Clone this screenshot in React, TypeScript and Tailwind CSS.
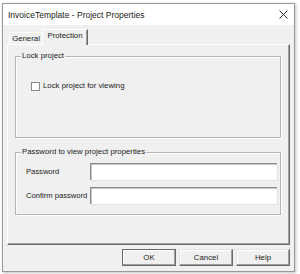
const font = "font-['Liberation_Sans',Arial,sans-serif]";

function GroupBox({ label, className, children }: { label: string; className: string; children?: React.ReactNode }) {
  return (
    <div className={`relative border border-[#b5b5b5] shadow-[inset_1px_1px_0_#ffffff,1px_1px_0_#ffffff] ${className}`}>
      <span className="absolute -top-[6px] left-[5px] whitespace-nowrap bg-[#f0f0f0] px-[1px] text-[7.8px] leading-[10px] text-[#1a1a1a]">
        {label}
      </span>
      {children}
    </div>
  );
}

function Field({ label }: { label: string }) {
  return (
    <div className="flex items-center">
      <span className="w-[64px] shrink-0 whitespace-nowrap text-[7.6px] leading-[10px] text-[#1a1a1a]">{label}</span>
      <div className="h-[17px] min-w-0 flex-1 bg-white border-t border-l border-[#8c8c8c] shadow-[inset_1px_1px_0_#c8c8c8,1px_1px_0_#e3e3e3]" />
    </div>
  );
}

function Button({ label, isDefault }: { label: string; isDefault?: boolean }) {
  return (
    <div
      className={
        isDefault
          ? 'flex h-[17px] w-[54px] items-center justify-center border border-[#6a6a6a] bg-[#f0f0f0] text-[7.8px] text-[#1a1a1a] shadow-[inset_-1px_-1px_0_#a0a0a0,inset_1px_1px_0_#ffffff]'
          : 'flex h-[17px] w-[54px] items-center justify-center border-t border-l border-[#e3e3e3] border-r border-b border-r-[#696969] border-b-[#696969] bg-[#f0f0f0] text-[7.8px] text-[#1a1a1a] shadow-[inset_-1px_-1px_0_#a0a0a0,inset_1px_1px_0_#ffffff]'
      }
    >
      {label}
    </div>
  );
}

export default function App() {
  return (
    <div className={`h-[274px] w-[300px] bg-white pl-[2px] pt-[3px] ${font}`}>
      <div className="flex h-[269px] w-[293px] flex-col border border-[#9a9a9a] bg-[#f0f0f0] shadow-[1px_1px_3px_rgba(0,0,0,0.25)]">
        <div className="flex h-[21px] items-center justify-between bg-white pl-[5px] pr-[6px]">
          <span className="text-[8.5px] leading-[10px] text-[#1a1a1a]">InvoiceTemplate - Project Properties</span>
          <svg width="9" height="9" viewBox="0 0 9 9">
            <path d="M0.5 0.5L8.5 8.5M8.5 0.5L0.5 8.5" stroke="#333" strokeWidth="1" />
          </svg>
        </div>

        <div className="flex flex-1 flex-col px-[4px] pt-[4px]">
          <div className="flex h-[15px] items-end pl-[2px]">
            <div className="flex h-[12px] w-[33px] items-center justify-center border-t border-l border-white text-[7.8px] leading-[10px] text-[#1a1a1a]">
              General
            </div>
            <div className="relative z-10 -mb-px flex h-[16px] w-[46px] items-center justify-center border-t border-l border-white border-r border-r-[#696969] bg-[#f0f0f0] pb-[3px] text-[7.8px] leading-[10px] text-[#1a1a1a] shadow-[inset_-1px_0_0_#a0a0a0]">
              Protection
            </div>
          </div>

          <div className="flex h-[201px] flex-col border-t border-l border-white border-r border-b border-r-[#696969] border-b-[#696969] pl-[7px] pr-[8px] pt-[11px] shadow-[inset_-1px_-1px_0_#a0a0a0]">
            <GroupBox label="Lock project" className="h-[82px] pl-[15px] pt-[24px]">
              <div className="flex items-center gap-[3px]">
                <div className="h-[9px] w-[9px] border border-[#8a8a8a] bg-white" />
                <span className="text-[7.8px] leading-[10px] text-[#1a1a1a]">Lock project for viewing</span>
              </div>
            </GroupBox>

            <GroupBox label="Password to view project properties" className="mt-[14px] flex h-[63px] flex-col gap-[7px] pl-[10px] pr-[3px] pt-[10px]">
              <Field label="Password" />
              <Field label="Confirm password" />
            </GroupBox>
          </div>

          <div className="mt-[4px] flex justify-end gap-[3px]">
            <Button label="OK" isDefault />
            <Button label="Cancel" />
            <Button label="Help" />
          </div>
        </div>
      </div>
    </div>
  );
}
